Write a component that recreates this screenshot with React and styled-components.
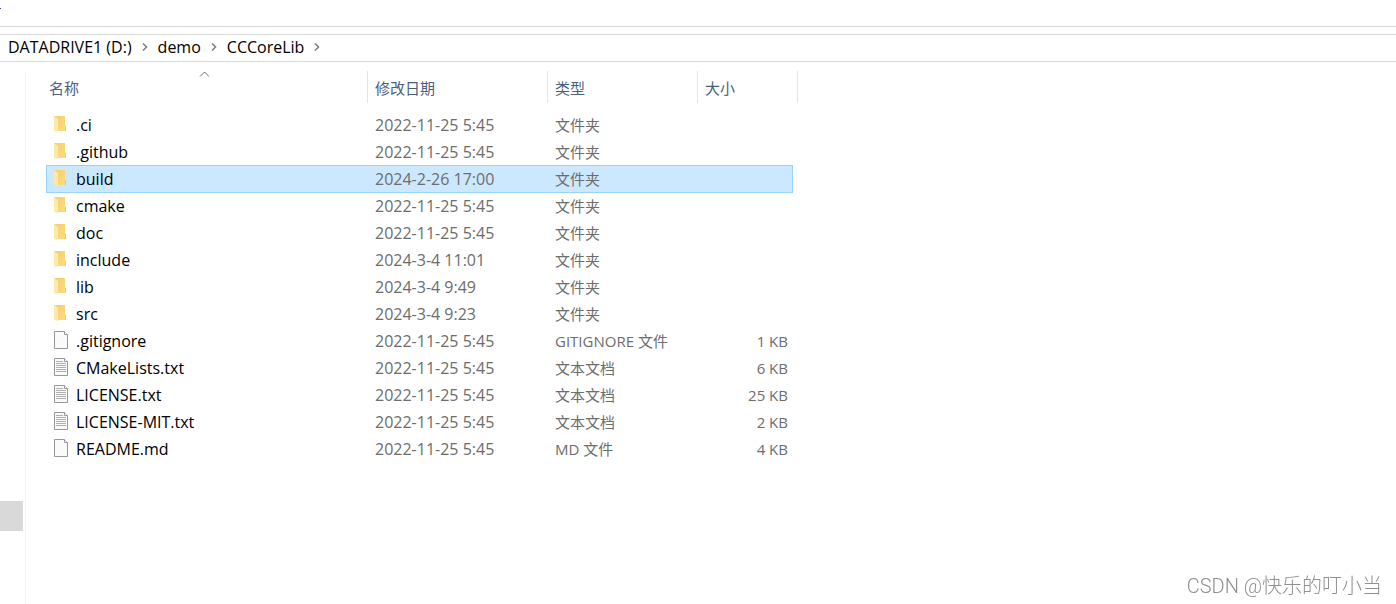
import React from "react";
import styled, { createGlobalStyle } from "styled-components";

const files = [
  { name: ".ci", date: "2022-11-25 5:45", type: "文件夹", icon: "folder" },
  { name: ".github", date: "2022-11-25 5:45", type: "文件夹", icon: "folder" },
  { name: "build", date: "2024-2-26 17:00", type: "文件夹", icon: "folder" },
  { name: "cmake", date: "2022-11-25 5:45", type: "文件夹", icon: "folder" },
  { name: "doc", date: "2022-11-25 5:45", type: "文件夹", icon: "folder" },
  { name: "include", date: "2024-3-4 11:01", type: "文件夹", icon: "folder" },
  { name: "lib", date: "2024-3-4 9:49", type: "文件夹", icon: "folder" },
  { name: "src", date: "2024-3-4 9:23", type: "文件夹", icon: "folder" },
  { name: ".gitignore", date: "2022-11-25 5:45", type: "GITIGNORE 文件", size: "1 KB", icon: "file" },
  { name: "CMakeLists.txt", date: "2022-11-25 5:45", type: "文本文档", size: "6 KB", icon: "text" },
  { name: "LICENSE.txt", date: "2022-11-25 5:45", type: "文本文档", size: "25 KB", icon: "text" },
  { name: "LICENSE-MIT.txt", date: "2022-11-25 5:45", type: "文本文档", size: "2 KB", icon: "text" },
  { name: "README.md", date: "2022-11-25 5:45", type: "MD 文件", size: "4 KB", icon: "file" },
];

const path = ["DATADRIVE1 (D:)", "demo", "CCCoreLib"];

const FolderIcon = () => (
  <RowIcon width="16" height="18" viewBox="0 0 16 18" aria-hidden="true">
    <defs>
      <linearGradient id="folderBack" x1="0" y1="0" x2="1" y2="1">
        <stop offset="0" stopColor="#f3d070" />
        <stop offset="1" stopColor="#fbdc82" />
      </linearGradient>
    </defs>
    <path d="M1 1h11v9l1 1v5H1z" fill="url(#folderBack)" />
    <path d="M12 11h1v5h-1z" fill="#eecb70" />
    <path d="M1 1l4 3v12l-1 1-3-1z" fill="#ffe9a6" />
  </RowIcon>
);

const FileIcon = ({ lines }) => (
  <RowIcon width="16" height="18" viewBox="0 0 16 18" aria-hidden="true">
    <path d="M1.5 .5h10l3 3v14h-13z" fill="#fafafa" stroke="#979797" />
    <path d="M11.5 .5v3h3" fill="#fff" stroke="#979797" />
    {lines && (
      <path
        d="M3 3.5h7M3 5.5h10M3 7.5h10M3 9.5h10M3 11.5h10M3 13.5h10"
        stroke="#b0b0b0"
      />
    )}
  </RowIcon>
);

const Chevron = () => (
  <svg width="8" height="10" viewBox="0 0 8 10" aria-hidden="true">
    <path d="M2 1.5l3.5 3.5-3.5 3.5" fill="none" stroke="#808080" strokeWidth="1.6" />
  </svg>
);

const App = () => {
  const [selected, setSelected] = React.useState("build");

  return (
    <>
      <GlobalStyle />
      <Explorer>
        <Ribbon>
          <RibbonTab />
        </Ribbon>
        <AddressBar>
          {path.map((item) => (
            <Crumb key={item}>
              <CrumbLink href="#">{item}</CrumbLink>
              <Chevron />
            </Crumb>
          ))}
        </AddressBar>
        <Body>
          <NavPane>
            <NavThumb />
          </NavPane>
          <FileTable>
            <thead>
              <HeadRow>
                <HeadCell>
                  <SortMark width="11" height="6" viewBox="0 0 11 6" aria-hidden="true">
                    <path d="M1 5.5l4.5-4.5 4.5 4.5" fill="none" stroke="#6d6d6d" />
                  </SortMark>
                  <HeadBtn $first>名称</HeadBtn>
                </HeadCell>
                <HeadCell>
                  <HeadBtn>修改日期</HeadBtn>
                </HeadCell>
                <HeadCell>
                  <HeadBtn>类型</HeadBtn>
                </HeadCell>
                <HeadCell>
                  <HeadBtn>大小</HeadBtn>
                </HeadCell>
              </HeadRow>
            </thead>
            <FileList>
              {files.map((file) => (
                <FileRow
                  key={file.name}
                  $selected={file.name === selected}
                  onClick={() => setSelected(file.name)}
                >
                  <NameCell>
                    {file.icon === "folder" ? (
                      <FolderIcon />
                    ) : (
                      <FileIcon lines={file.icon === "text"} />
                    )}
                    {file.name}
                  </NameCell>
                  <DateCell>{file.date}</DateCell>
                  <Cell>{file.type}</Cell>
                  <Cell $right>{file.size}</Cell>
                </FileRow>
              ))}
            </FileList>
          </FileTable>
        </Body>
        <Watermark>CSDN @快乐的叮小当</Watermark>
      </Explorer>
    </>
  );
};

export default App;

const GlobalStyle = createGlobalStyle`
  * {
    box-sizing: border-box;
  }
  body {
    margin: 0;
    background: #fff;
    font-family: "Open Sans", "Noto Sans CJK SC", sans-serif;
    font-size: 15px;
    color: #000;
  }
`;
const Explorer = styled.div`
  display: flex;
  flex-direction: column;
  min-height: 100vh;
`;
const Ribbon = styled.div`
  height: 27px;
  padding-top: 8px;
  border-bottom: 1px solid #dadada;
`;
const RibbonTab = styled.div`
  width: 1px;
  height: 1px;
  background: #2b579a;
`;
const AddressBar = styled.nav`
  display: flex;
  align-items: center;
  height: 28px;
  margin-top: 7px;
  padding: 0 8px 2px;
  border-top: 1px solid #d9d9d9;
  border-bottom: 1px solid #d9d9d9;
`;
const Crumb = styled.span`
  display: flex;
  align-items: center;
  gap: 9px;
  margin-right: 9px;
`;
const CrumbLink = styled.a`
  font-size: 16px;
  line-height: 24px;
  color: #000;
  text-decoration: none;
`;
const Body = styled.div`
  display: flex;
  flex: 1;
  padding-top: 9px;
`;
const NavPane = styled.div`
  display: flex;
  flex-direction: column;
  justify-content: flex-end;
  width: 26px;
  padding-bottom: 73px;
  border-right: 1px solid #f3f3f3;
`;
const NavThumb = styled.div`
  width: 23px;
  height: 30px;
  background: #d9d9d9;
`;
const FileTable = styled.table`
  display: block;
  margin-left: 20px;
  border-spacing: 0;
`;
const HeadRow = styled.tr`
  display: grid;
  grid-template-columns: 322px 180px 150px 100px;
  height: 32px;
`;
const HeadCell = styled.th`
  position: relative;
  display: flex;
  padding: 0;
  border-right: 1px solid #e5e5e5;
`;
const HeadBtn = styled.button`
  flex: 1;
  padding: 0 ${(props) => (props.$first ? "3px" : "7px")};
  border: 0;
  background: none;
  font: inherit;
  font-weight: 400;
  text-align: left;
  color: #4c607a;
`;
const SortMark = styled.svg`
  position: absolute;
  top: 0;
  left: 0;
  right: 4px;
  margin: 0 auto;
`;
const FileList = styled.tbody`
  display: block;
  padding-top: 8px;
`;
const FileRow = styled.tr`
  display: grid;
  grid-template-columns: 322px 180px 150px 95px;
  align-items: center;
  height: 28px;
  margin: 0 5px -1px 0;
  ${(props) =>
    props.$selected &&
    "background: #cce8ff; outline: 1px solid #99d1ff; outline-offset: -1px;"}
`;
const Cell = styled.td`
  padding: 0 5px 0 7px;
  line-height: 28px;
  white-space: nowrap;
  text-align: ${(props) => (props.$right ? "right" : "left")};
  color: #6d6d6d;
`;
const DateCell = styled(Cell)`
  font-size: 16px;
`;
const NameCell = styled(Cell)`
  display: flex;
  align-items: center;
  gap: 7px;
  font-size: 16px;
  color: #000;
`;
const RowIcon = styled.svg`
  margin-bottom: 2px;
`;
const Watermark = styled.div`
  position: fixed;
  right: 14px;
  bottom: 3px;
  font-family: Roboto, "Noto Sans CJK SC", sans-serif;
  font-size: 20px;
  font-weight: 300;
  line-height: 30px;
  color: #909090;
`;
